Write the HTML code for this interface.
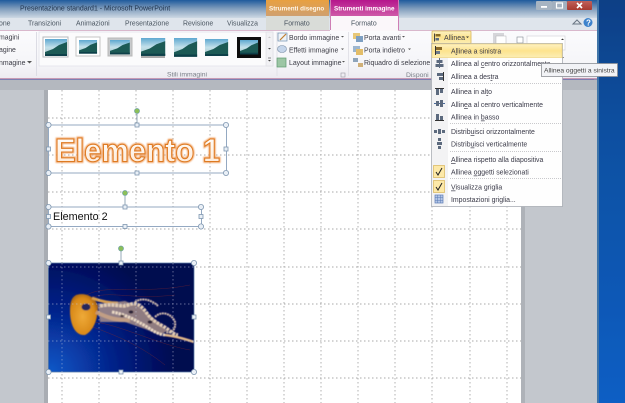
<!DOCTYPE html>
<html><head><meta charset="utf-8">
<style>
html,body{margin:0;padding:0;width:625px;height:403px;overflow:hidden;background:#0a55b0}
svg{display:block}
text{font-family:"Liberation Sans",sans-serif;font-size:6.9px;fill:#3c3c46}
.t{font-size:6.9px;fill:#4a5560}
.m{font-size:6.9px;fill:#3a3a48}
</style></head><body>
<svg width="625" height="403" viewBox="0 0 625 403" xmlns="http://www.w3.org/2000/svg">
<defs>
<linearGradient id="title" x1="0" y1="0" x2="0" y2="1"><stop offset="0" stop-color="#1f5a9c"/><stop offset=".45" stop-color="#7f9cbc"/><stop offset="1" stop-color="#d6dfe8"/></linearGradient>
<linearGradient id="desk" x1="0" y1="0" x2="0" y2="1"><stop offset="0" stop-color="#0c3f86"/><stop offset=".3" stop-color="#0b4f9f"/><stop offset="1" stop-color="#0a5ec4"/></linearGradient>
<linearGradient id="rib" x1="0" y1="0" x2="0" y2="1"><stop offset="0" stop-color="#fbfbfd"/><stop offset=".7" stop-color="#f5f5f8"/><stop offset="1" stop-color="#eceaf0"/></linearGradient>
<linearGradient id="sky" x1="0" y1="0" x2="0" y2="1"><stop offset="0" stop-color="#5ea8d0"/><stop offset=".5" stop-color="#c3e0ea"/><stop offset="1" stop-color="#a9c8c8"/></linearGradient>
<linearGradient id="hl" x1="0" y1="0" x2="0" y2="1"><stop offset="0" stop-color="#fdf2c4"/><stop offset=".5" stop-color="#fde38e"/><stop offset="1" stop-color="#fbeeb4"/></linearGradient>
<linearGradient id="org" x1="0" y1="0" x2="0" y2="1"><stop offset="0" stop-color="#e8a040"/><stop offset="1" stop-color="#cfa070"/></linearGradient>
<linearGradient id="mag" x1="0" y1="0" x2="0" y2="1"><stop offset="0" stop-color="#b5168c"/><stop offset="1" stop-color="#cf5aa8"/></linearGradient>
<linearGradient id="red" x1="0" y1="0" x2="0" y2="1"><stop offset="0" stop-color="#c0605a"/><stop offset="1" stop-color="#a83a30"/></linearGradient>
<radialGradient id="sea" gradientUnits="userSpaceOnUse" cx="50" cy="372" r="125"><stop offset="0" stop-color="#0a58c8"/><stop offset=".5" stop-color="#05228a"/><stop offset="1" stop-color="#020850"/></radialGradient>
<radialGradient id="bell" cx=".45" cy=".55" r=".65"><stop offset="0" stop-color="#eeaa38"/><stop offset=".7" stop-color="#d88818"/><stop offset="1" stop-color="#8a5010"/></radialGradient>
<linearGradient id="eltext" x1="0" y1="0" x2="0" y2="1"><stop offset="0" stop-color="#fff"/><stop offset="1" stop-color="#fde8d4"/></linearGradient>
<filter id="soft" x="-5%" y="-5%" width="110%" height="110%"><feGaussianBlur stdDeviation=".3"/></filter>
<filter id="glow" x="-10%" y="-30%" width="120%" height="160%"><feGaussianBlur stdDeviation=".9"/></filter>
<filter id="b1"><feGaussianBlur stdDeviation=".45"/></filter>
<g id="thumb"><rect width="22" height="17" fill="url(#sky)"/><path d="M0 13 L8 10 L14 6 L22 3 V17 H0Z" fill="#1d5a55"/><path d="M0 15 H22 V17 H0Z" fill="#0f3f48"/></g>
</defs>
<g filter="url(#soft)">
<!-- desktop -->
<rect x="590" y="0" width="35" height="403" fill="url(#desk)"/>
<rect x="594" y="0" width="5" height="403" fill="#3f74a8"/>
<!-- gray workspace -->
<rect x="0" y="80" width="597" height="323" fill="#c3c7cd"/>
<rect x="0" y="80" width="597" height="10" fill="#b4b8bf"/>
<rect x="521" y="90" width="4" height="313" fill="#aeb2b8"/>
<rect x="44" y="90" width="4" height="313" fill="#a9adb3"/>
<!-- slide -->
<rect x="48" y="90" width="473" height="313" fill="#fff"/>
<g stroke="#a8a8a8" stroke-width=".9" stroke-dasharray="1.5 2.5" fill="none">
<path d="M62 90V403M99 90V403M136 90V403M173 90V403M210 90V403M247 90V403M284 90V403M321 90V403M358 90V403M395 90V403M432 90V403M470 90V403M507 90V403"/>
<path d="M48 118H521M48 155H521M48 192H521M48 229H521M48 267H521M48 304H521M48 341H521M48 378H521"/>
</g>
<!-- title bar -->
<rect x="0" y="0" width="597" height="19" fill="url(#title)"/>
<rect x="0" y="18" width="597" height="13" fill="#dfe5ec"/>
<text x="20" y="10.5" style="font-size:7px;fill:#20344e">Presentazione standard1  -  Microsoft PowerPoint</text>
<!-- ribbon -->
<rect x="0" y="30" width="597" height="49" fill="url(#rib)"/>
<rect x="0" y="30" width="330" height="1" fill="#d9b8cc"/>
<rect x="398" y="30" width="199" height="1" fill="#d9b8cc"/>
<rect x="0" y="78" width="597" height="1.6" fill="#c79ab4"/>
<!-- tabs -->
<text class="t" x="-1" y="25.500">one</text>
<text class="t" x="28" y="25.500">Transizioni</text>
<text class="t" x="76" y="25.500">Animazioni</text>
<text class="t" x="125" y="25.500">Presentazione</text>
<text class="t" x="183" y="25.500">Revisione</text>
<text class="t" x="227" y="25.500">Visualizza</text>
<rect x="266" y="0" width="63" height="16" fill="url(#org)"/>
<rect x="266" y="16" width="63" height="14" fill="#d9dcd8"/>
<text x="269" y="10.500" style="font-size:6.300px;fill:#fff6e8;font-weight:bold">Strumenti disegno</text>
<text class="t" x="284" y="25.500">Formato</text>
<rect x="331" y="0" width="67" height="16" fill="url(#mag)"/>
<rect x="331" y="16" width="67" height="15" fill="#fbf7fa"/>
<path d="M330.500 0V30M398.500 0V30" stroke="#cf7eb5" stroke-width="1"/>
<text x="334" y="10.500" style="font-size:6.300px;fill:#fff;font-weight:bold">Strumenti immagine</text>
<text class="t" x="351" y="25.500">Formato</text>
<!-- window buttons -->
<rect x="536" y="1" width="16" height="9" rx="1" fill="#a7b4c2"/><rect x="541" y="6" width="6" height="1.800" fill="#fff"/>
<rect x="552" y="1" width="15" height="9" rx="1" fill="#a3b0bf"/><rect x="556.500" y="3" width="6" height="5" fill="none" stroke="#fff" stroke-width="1.200"/>
<rect x="567" y="1" width="25" height="9" rx="1" fill="url(#red)"/>
<path d="M577 3L582 8M582 3L577 8" stroke="#fff" stroke-width="1.600"/>
<path d="M573 24L577 20L581 24Z" fill="none" stroke="#6a7684" stroke-width="1"/>
<circle cx="588" cy="22.500" r="4.500" fill="#3d82cc"/>
<text x="586" y="25.500" style="font-size:8px;font-weight:bold;fill:#fff">?</text>
<!-- left fragment -->
<text x="-1" y="39.500">magini</text>
<text x="-1" y="52">agine</text>
<text x="-1" y="65">nmagine</text>
<path d="M27 61l2.500 2.500 2.500-2.500z" fill="#555"/>
<path d="M36.500 32V76" stroke="#dcdce4"/>
<!-- gallery -->
<rect x="39" y="32" width="234" height="34" fill="#fbfbfc" stroke="#e3e3ea" stroke-width=".8"/>
<rect x="266" y="32" width="7" height="34" fill="#f1f1f4" stroke="#dcdce2" stroke-width=".6"/>
<path d="M268 38l1.500-1.500 1.500 1.500z" fill="#c8c8c8"/><path d="M268 48l1.500 1.500 1.500-1.500z" fill="#444"/><path d="M268 60l1.500 1.500 1.500-1.500z" fill="#444"/><path d="M268 58h3" stroke="#444" stroke-width=".6"/>
<rect x="43" y="37" width="25" height="20" fill="#fff" stroke="#b5b9bd"/><use href="#thumb" x="45" y="39"/>
<rect x="76" y="37" width="24" height="19" fill="#fff" stroke="#c5c5c5"/><use href="#thumb" transform="translate(79 40) scale(.82 .8)"/>
<rect x="108" y="38" width="24" height="18" fill="#c8cacc" stroke="#b8b8b8"/><use href="#thumb" transform="translate(110 40) scale(.9 .84)"/>
<use href="#thumb" transform="translate(141 38) scale(1.1 1.05)"/><rect x="141" y="56" width="24" height="2" fill="#a9a9a9"/>
<use href="#thumb" transform="translate(174 38) scale(1.05 1.1)"/>
<use href="#thumb" transform="translate(205 39) scale(1.05 1)"/>
<rect x="237" y="37" width="24" height="21" fill="#0c0c0c"/><use href="#thumb" transform="translate(240 40) scale(.82 .85)"/>
<text x="187" y="76.500" text-anchor="middle" style="font-size:6.800px;fill:#7a7f88">Stili immagini</text>
<!-- image style commands -->
<path d="M277 32V76" stroke="#e2e2e8"/>
<rect x="278" y="33" width="9" height="8" fill="#eef3f8" stroke="#6f8fb0" stroke-width=".7"/><path d="M280 40l6-6" stroke="#c08030" stroke-width="1.200"/>
<ellipse cx="282" cy="49" rx="4.500" ry="3.500" fill="#c5d5ea" stroke="#7a8fa8" stroke-width=".6"/>
<rect x="277" y="58" width="9" height="9" fill="#9cc6a4" stroke="#5f9a70" stroke-width=".7"/>
<text x="289" y="40">Bordo immagine</text><path d="M341 36l1.500 1.500 1.500-1.500z" fill="#555"/>
<text x="289" y="52.500">Effetti immagine</text><path d="M341 48.500l1.500 1.500 1.500-1.500z" fill="#555"/>
<text x="289" y="65">Layout immagine</text><path d="M342 61l1.500 1.500 1.500-1.500z" fill="#555"/>
<rect x="341" y="73" width="4" height="4" fill="none" stroke="#9a9aa4" stroke-width=".6"/>
<path d="M348.500 32V76" stroke="#e2e2e8"/>
<!-- arrange -->
<rect x="353" y="33" width="7" height="6" fill="#e8c878"/><rect x="356" y="36" width="7" height="6" fill="#7d9fc2"/>
<rect x="353" y="46" width="7" height="6" fill="#9db6cf"/><rect x="356" y="49" width="7" height="6" fill="#e3bd68"/>
<rect x="353" y="58" width="5" height="4" fill="#8ea4bb"/><rect x="358" y="63" width="5" height="4" fill="#d0b078"/>
<text x="364" y="40">Porta avanti</text><path d="M402 36l1.500 1.500 1.500-1.500z" fill="#555"/>
<text x="364" y="52.500">Porta indietro</text><path d="M408 48.500l1.500 1.500 1.500-1.500z" fill="#555"/>
<text x="364" y="65">Riquadro di selezione</text>
<text x="406" y="77" style="font-size:6.800px;fill:#7a7f88">Disponi</text>
<!-- right of menu in ribbon -->
<rect x="493" y="33" width="11" height="11" fill="#d6d6da"/><rect x="496" y="36" width="10" height="10" fill="#fff" stroke="#b0b0b4" stroke-width=".5"/>
<rect x="517" y="37" width="6" height="6" fill="#fff" stroke="#808890" stroke-width=".6"/>
<rect x="527" y="36" width="38" height="14" fill="#fff" stroke="#d5d5dc" stroke-width=".7"/>
<path d="M561 40l1.500-1.500 1.500 1.500zM561 57l1.500 1.500 1.500-1.500zM561 66l1.500-1.500 1.500 1.500z" fill="#333"/>
<!-- Allinea button -->
<rect x="432" y="31" width="39" height="12.500" rx="1" fill="url(#hl)" stroke="#d8b658" stroke-width=".8"/>
<path d="M434.500 33.500V41.500" stroke="#333" stroke-width=".9"/><rect x="435.500" y="34" width="5" height="2.500" fill="#8a6a20"/><rect x="435.500" y="38" width="3.500" height="2.500" fill="#5d6d80"/>
<text x="444" y="39.800" style="font-size:7px">Allinea</text><path d="M466 36.500l1.500 1.500 1.500-1.500z" fill="#333"/>
<!-- menu -->
<rect x="431.500" y="43.500" width="131" height="163" fill="#fefefe" stroke="#a9adb4" stroke-width=".8"/>
<rect x="432" y="44" width="16" height="162" fill="#f3f3f4"/>
<rect x="432" y="44" width="130" height="13.500" fill="url(#hl)" stroke="#eccd72" stroke-width=".6"/>
<path d="M450 83.500H561M450 123.500H561M450 151.500H561M450 178.500H561" stroke="#c9c9cc" stroke-dasharray="1 1"/>
<text class="m" x="451" y="53.300">A<tspan text-decoration="underline">l</tspan>linea a sinistra</text>
<text class="m" x="451" y="66">Allinea al <tspan text-decoration="underline">c</tspan>entro orizzontalmente</text>
<text class="m" x="451" y="79">Allinea a des<tspan text-decoration="underline">t</tspan>ra</text>
<text class="m" x="451" y="94">Allinea in al<tspan text-decoration="underline">t</tspan>o</text>
<text class="m" x="451" y="107">Allin<tspan text-decoration="underline">e</tspan>a al centro verticalmente</text>
<text class="m" x="451" y="119.500">Allinea in <tspan text-decoration="underline">b</tspan>asso</text>
<text class="m" x="451" y="134">Distrib<tspan text-decoration="underline">u</tspan>isci orizzontalmente</text>
<text class="m" x="451" y="146.500">Distrib<tspan text-decoration="underline">u</tspan>isci verticalmente</text>
<text class="m" x="451" y="162"><tspan text-decoration="underline">A</tspan>llinea rispetto alla diapositiva</text>
<text class="m" x="451" y="174.500">Allinea <tspan text-decoration="underline">o</tspan>ggetti selezionati</text>
<text class="m" x="451" y="189.500"><tspan text-decoration="underline">V</tspan>isualizza griglia</text>
<text class="m" x="451" y="202">Impostazioni griglia...</text>
<!-- menu icons -->
<g fill="#5b6b7e" stroke="none">
<rect x="435" y="46" width="1" height="9" fill="#333"/><rect x="436" y="47" width="6" height="3" fill="#8a6a2a"/><rect x="436" y="51" width="4" height="3" fill="#6c7a8a"/>
<rect x="439" y="58" width="1" height="10"/><rect x="436.500" y="60" width="6" height="3"/><rect x="435.500" y="64" width="8" height="3"/>
<rect x="443" y="72" width="1" height="9" fill="#333"/><rect x="437" y="73" width="6" height="3"/><rect x="439" y="77" width="4" height="3"/>
<rect x="435" y="88" width="9" height="1" fill="#333"/><rect x="436" y="89" width="3" height="6"/><rect x="440" y="89" width="3" height="4"/>
<rect x="434" y="103" width="11" height="1" fill="#4a6a9a"/><rect x="436" y="101" width="3" height="5"/><rect x="440" y="100" width="3" height="7"/>
<rect x="435" y="120" width="9" height="1" fill="#333"/><rect x="436" y="114" width="3" height="6"/><rect x="440" y="116" width="3" height="4"/>
<rect x="434" y="130" width="3" height="3"/><rect x="438" y="129" width="3" height="5"/><rect x="442" y="130" width="3" height="3"/>
<rect x="438" y="138" width="3" height="3"/><rect x="437" y="142" width="5" height="3"/><rect x="438" y="146" width="3" height="3"/>
</g>
<rect x="433.500" y="165.500" width="11" height="12" fill="#fde9a8" stroke="#d8b658" stroke-width=".7"/>
<path d="M436 172l2 3 4-7" fill="none" stroke="#222" stroke-width="1"/>
<rect x="433.500" y="180.500" width="11" height="12" fill="#fde9a8" stroke="#d8b658" stroke-width=".7"/>
<path d="M436 187l2 3 4-7" fill="none" stroke="#222" stroke-width="1"/>
<rect x="435" y="195" width="8" height="8" fill="#b4c6e6" stroke="#5b7bb5" stroke-width=".7"/><path d="M437.700 195v8M440.300 195v8M435 197.700h8M435 200.300h8" stroke="#5b7bb5" stroke-width=".5"/>
<!-- tooltip -->
<rect x="541.500" y="63.500" width="76" height="13" fill="#f2f3f6" stroke="#8c8f95" stroke-width=".8"/>
<text x="544" y="72.600" style="font-size:6.700px;fill:#444">Allinea oggetti a sinistra</text>
<!-- Elemento 1 box -->
<rect x="48.500" y="125" width="178" height="48" fill="none" stroke="#94a9c2" stroke-width="1"/>
<path d="M137 125V114M125 207V196M121 263V251" stroke="#94a9b8" stroke-width="1"/>
<text x="55" y="161.500" textLength="165" lengthAdjust="spacingAndGlyphs" style="font-size:32px;font-weight:bold;fill:none;stroke:#f0a060;stroke-width:2.800" filter="url(#glow)">Elemento 1</text>
<text x="55" y="161.500" textLength="165" lengthAdjust="spacingAndGlyphs" style="font-size:32px;font-weight:bold;fill:url(#eltext);stroke:#dd7a22;stroke-width:1">Elemento 1</text>
<!-- Elemento 2 box -->
<rect x="48.500" y="207" width="153" height="19.500" fill="none" stroke="#94a9c2" stroke-width="1"/>
<text x="53" y="220" style="font-size:10.800px;fill:#111">Elemento 2</text>
<!-- image -->
<rect x="48" y="263" width="146" height="109" fill="url(#sea)"/>
<g stroke="#7a2a2a" stroke-width=".5" fill="none" opacity=".6">
<path d="M85 296C105 283 140 295 190 285M90 298C110 290 130 300 175 295M90 326C115 335 140 345 165 365M95 322C120 325 160 345 190 350"/>
</g>
<g filter="url(#b1)">
<path d="M76 295C86 292 95 297 98 306C98 316 95 330 85 335C74 336 70 322 70 311C70 303 71 298 76 295Z" fill="url(#bell)"/>
<ellipse cx="86" cy="307" rx="4.500" ry="3.500" fill="#26285a"/>
<path d="M92 298C100 301 110 303 118 303" stroke="#d8a050" stroke-width="3" fill="none"/>
<path d="M96 312C108 318 118 321 130 320" stroke="#c89870" stroke-width="4" fill="none"/>
<path d="M98 304L125 301L140 307L158 322L167 331L160 335L145 329L125 322L100 322Z" fill="#bfa08c" opacity=".75"/>
<path d="M100 306C115 303 122 308 128 305C135 302 140 304 146 312C150 318 155 322 163 326C170 330 172 334 178 335" stroke="#e2ccb4" stroke-width="3.500" fill="none" stroke-dasharray="3 .8"/>
<path d="M112 312C125 314 135 320 142 324C150 328 155 334 165 335" stroke="#ecdac4" stroke-width="3" fill="none" stroke-dasharray="2.500 .8"/>
<path d="M135 302C142 297 152 300 158 306" stroke="#d8c4b0" stroke-width="2" fill="none" stroke-dasharray="2 .6"/>
<path d="M155 317C162 310 172 314 175 322C176 329 172 334 166 332" stroke="#d8c4b0" stroke-width="2" fill="none" stroke-dasharray="2 .6"/>
<path d="M165 335C175 336 185 339 194 342" stroke="#e0b888" stroke-width="2.500" fill="none"/>
<ellipse cx="131" cy="312" rx="2.500" ry="1.800" fill="#2a2438"/><ellipse cx="150" cy="322" rx="2.500" ry="1.800" fill="#2a2438"/><ellipse cx="122" cy="316" rx="1.800" ry="1.200" fill="#4a3a40"/>
</g>
<rect x="48.500" y="263" width="145.500" height="109" fill="none" stroke="#5e7ea8" stroke-width=".8"/>
<path d="M62 263V372M99 263V372M136 263V372M173 263V372M48 267H194M48 304H194M48 341H194" stroke="#c0c4d8" stroke-width=".7" stroke-dasharray="1.500 2.500" fill="none" opacity=".7"/>
<!-- handles -->
<g fill="#e9eff6" stroke="#7f97b0" stroke-width=".8">
<circle cx="48.500" cy="125" r="2.600"/><circle cx="226" cy="125" r="2.600"/><circle cx="48.500" cy="173" r="2.600"/><circle cx="226" cy="173" r="2.600"/>
<rect x="135" y="123" width="4" height="4"/><rect x="135" y="171" width="4" height="4"/><rect x="46.500" y="147" width="4" height="4"/><rect x="224" y="147" width="4" height="4"/>
<circle cx="48.500" cy="207" r="2.600"/><circle cx="201" cy="207" r="2.600"/><circle cx="48.500" cy="226.500" r="2.600"/><circle cx="201" cy="226.500" r="2.600"/>
<rect x="123" y="205" width="4" height="4"/><rect x="123" y="224.500" width="4" height="4"/><rect x="46.500" y="214.500" width="4" height="4"/><rect x="199" y="214.500" width="4" height="4"/>
<circle cx="48.500" cy="263" r="2.600"/><circle cx="194" cy="263" r="2.600"/><circle cx="48.500" cy="372" r="2.600"/><circle cx="194" cy="372" r="2.600"/>
<rect x="119" y="261" width="4" height="4"/><rect x="119" y="370" width="4" height="4"/><rect x="46.500" y="315" width="4" height="4"/><rect x="192" y="315" width="4" height="4"/>
</g>
<g fill="#8cc058" stroke="#6ea0a0" stroke-width=".7">
<circle cx="137" cy="111" r="2.500"/><circle cx="125" cy="193" r="2.500"/><circle cx="121" cy="248.500" r="2.500"/>
</g>
</g>
</svg>
</body></html>
